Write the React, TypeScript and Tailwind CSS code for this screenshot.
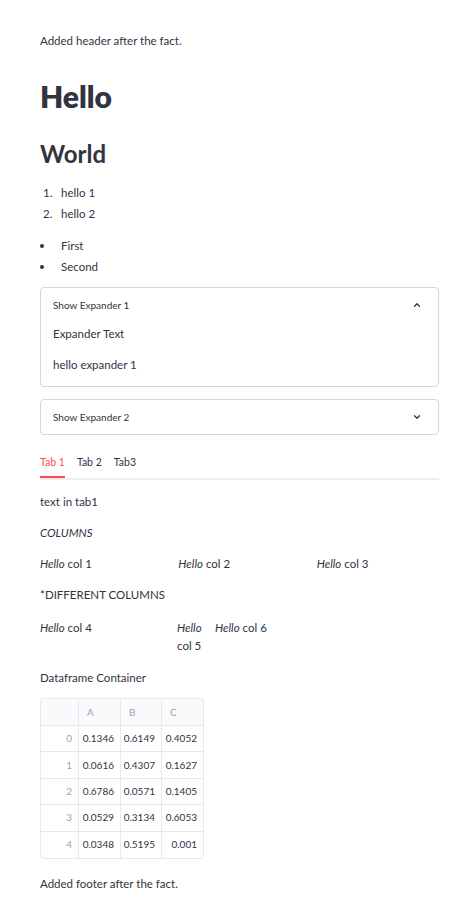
import React from "react";

const font = { fontFamily: '"Source Sans Pro", Lato, "Noto Sans", sans-serif' };

const rows = [
    ["0", "0.1346", "0.6149", "0.4052"],
    ["1", "0.0616", "0.4307", "0.1627"],
    ["2", "0.6786", "0.0571", "0.1405"],
    ["3", "0.0529", "0.3134", "0.6053"],
    ["4", "0.0348", "0.5195", "0.001"],
];

function Chevron({ up }: { up?: boolean }) {
    return (
        <svg width="10" height="10" viewBox="0 0 24 24" fill="none" stroke="#31333f" strokeWidth="3" strokeLinecap="round" strokeLinejoin="round">
            <path d={up ? "M6 15l6-6 6 6" : "M6 9l6 6 6-6"} />
        </svg>
    );
}

function Line({ children, className = "" }: { children: React.ReactNode; className?: string }) {
    return <div className={`h-[18px] leading-[18px] text-[11.5px] ${className}`}>{children}</div>;
}

export default function App() {
    return (
        <div className="min-h-[912px] bg-white text-[#31333f] pl-[40px] pr-[17px] pt-[32px] pb-[18px]" style={font}>
            <Line>Added header after the fact.</Line>

            <h1 className="mt-[28px] h-[36px] leading-[36px] text-[30px] font-extrabold">Hello</h1>
            <h2 className="mt-[26px] h-[28px] leading-[28px] text-[24px] font-bold">World</h2>

            <ol className="mt-[14px] text-[11.5px]">
                {["hello 1", "hello 2"].map((t, i) => (
                    <li key={t} className="h-[21px] leading-[21px] flex">
                        <span className="w-[21px] pl-[3px]">{i + 1}.</span>
                        <span>{t}</span>
                    </li>
                ))}
            </ol>
            <ul className="mt-[11px] text-[11.5px]">
                {["First", "Second"].map((t) => (
                    <li key={t} className="h-[21px] leading-[21px] flex items-center">
                        <span className="w-[21px] flex">
                            <span className="w-[4px] h-[4px] rounded-full bg-[#31333f]" />
                        </span>
                        <span>{t}</span>
                    </li>
                ))}
            </ul>

            <div className="mt-[10px] border border-[#d6d6d9] rounded-[4px]">
                <div className="h-[34px] flex items-center justify-between px-[12px] text-[10px]">
                    <span>Show Expander 1</span>
                    <span className="mr-[4px]"><Chevron up /></span>
                </div>
                <div className="px-[12px] pb-[12px] text-[11.5px]">
                    <div className="h-[18px] leading-[18px] mt-[3px]">Expander Text</div>
                    <div className="h-[18px] leading-[18px] mt-[13px]">hello expander 1</div>
                </div>
            </div>

            <div className="mt-[12px] border border-[#d6d6d9] rounded-[4px]">
                <div className="h-[34px] flex items-center justify-between px-[12px] text-[10px]">
                    <span>Show Expander 2</span>
                    <span className="mr-[4px]"><Chevron /></span>
                </div>
            </div>

            <div className="mt-[15px] flex gap-[12px] text-[10.5px] border-b-2 border-[#eeeef0]">
                <div className="h-[28px] leading-[24px] border-b-2 border-[#ff4b4b] -mb-[2px] text-[#ff4b4b]">Tab 1</div>
                <div className="h-[28px] leading-[24px]">Tab 2</div>
                <div className="h-[28px] leading-[24px]">Tab3</div>
            </div>

            <Line className="mt-[13px]">text in tab1</Line>
            <Line className="mt-[13px] italic">COLUMNS</Line>
            <div className="mt-[13px] grid grid-cols-3 gap-[16px] text-[11.5px] leading-[18px]">
                <div><em>Hello</em> col 1</div>
                <div><em>Hello</em> col 2</div>
                <div><em>Hello</em> col 3</div>
            </div>
            <Line className="mt-[13px]">*DIFFERENT COLUMNS</Line>
            <div className="mt-[15px] flex text-[11.5px] leading-[18px]">
                <div className="w-[137px]"><em>Hello</em> col 4</div>
                <div className="w-[38px]"><em>Hello</em> col 5</div>
                <div><em>Hello</em> col 6</div>
            </div>
            <Line className="mt-[14px]">Dataframe Container</Line>

            <div className="mt-[11px] w-[164px] border border-[#e6e9ef] rounded-[3px] overflow-hidden text-[10px]">
                <div className="flex h-[27px] bg-[#f9fafb] text-[#9ea2ad] border-b border-[#e6e9ef]">
                    <div className="w-[38px] border-r border-[#e6e9ef]" />
                    {["A", "B", "C"].map((h, i) => (
                        <div key={h} className={`${i === 0 ? "w-[42px]" : i === 1 ? "w-[41px]" : "flex-1"} ${i < 2 ? "border-r border-[#e6e9ef]" : ""} flex items-center px-[8px]`}>{h}</div>
                    ))}
                </div>
                {rows.map((r, ri) => (
                    <div key={r[0]} className={`flex h-[26.4px] ${ri < rows.length - 1 ? "border-b border-[#e6e9ef]" : ""}`}>
                        <div className="w-[38px] border-r border-[#e6e9ef] flex items-center justify-end pr-[6px] text-[#9ea2ad]">{r[0]}</div>
                        <div className="w-[42px] border-r border-[#e6e9ef] flex items-center justify-end pr-[6px]">{r[1]}</div>
                        <div className="w-[41px] border-r border-[#e6e9ef] flex items-center justify-end pr-[6px]">{r[2]}</div>
                        <div className="flex-1 flex items-center justify-end pr-[6px]">{r[3]}</div>
                    </div>
                ))}
            </div>

            <Line className="mt-[16px]">Added footer after the fact.</Line>
        </div>
    );
}
